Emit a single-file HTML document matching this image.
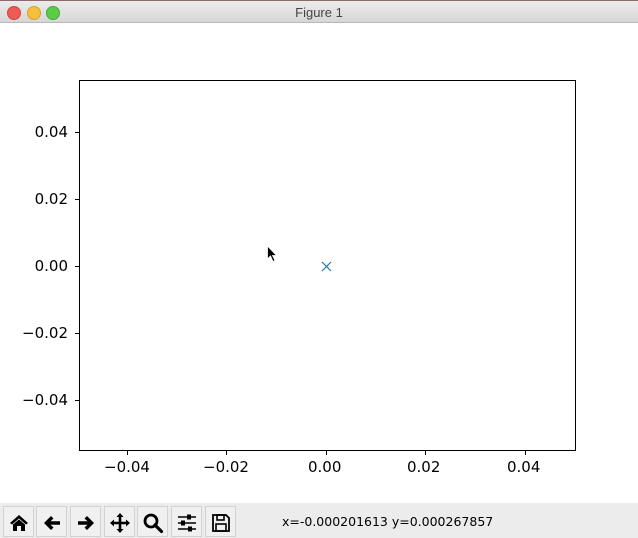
<!DOCTYPE html>
<html><head><meta charset="utf-8"><style>
body{margin:0;width:638px;height:538px;overflow:hidden;background:#fff;font-family:"Liberation Sans","DejaVu Sans",sans-serif;position:relative}
.tb{position:absolute;left:0;top:0;width:638px;height:23px;background:linear-gradient(#ececec,#d6d6d6);border-bottom:1px solid #b8b8b8;border-top:1px solid #8a6a6a;box-sizing:border-box}
.dot{position:absolute;top:5px;width:12px;height:12px;border-radius:50%}
.title{position:absolute;top:4px;left:0;width:638px;text-align:center;font-size:13px;color:#444}
.lbl{position:absolute;font-family:"DejaVu Sans",sans-serif;font-size:15px;color:#000}
.bar{position:absolute;left:0;top:503px;width:638px;height:35px;background:#ececec}
.btn{position:absolute;top:3px;width:31px;height:31px;background:#f0f0f0;border:1px solid #d2d2d2;box-sizing:border-box}
.btn svg{position:absolute;left:4px;top:5px}
</style></head><body>
<div class="tb">
<div class="dot" style="left:7px;background:#ee5a55;border:0.5px solid #d04440"></div>
<div class="dot" style="left:27px;background:#f5be3b;border:0.5px solid #d8a030"></div>
<div class="dot" style="left:46px;background:#5ccb48;border:0.5px solid #44a836"></div>
<div class="title">Figure 1</div>
</div>
<svg width="638" height="538" style="position:absolute;left:0;top:0">
<rect x="79.5" y="80.5" width="496" height="370" fill="none" stroke="#000" stroke-width="1"/>
<g stroke="#000" stroke-width="1">
<line x1="75" x2="79" y1="132.5" y2="132.5"/><line x1="75" x2="79" y1="199.5" y2="199.5"/><line x1="75" x2="79" y1="266.5" y2="266.5"/><line x1="75" x2="79" y1="333.5" y2="333.5"/><line x1="75" x2="79" y1="400.5" y2="400.5"/>
<line y1="451" y2="455" x1="127.5" x2="127.5"/><line y1="451" y2="455" x1="226.5" x2="226.5"/><line y1="451" y2="455" x1="326.5" x2="326.5"/><line y1="451" y2="455" x1="425.5" x2="425.5"/><line y1="451" y2="455" x1="525.5" x2="525.5"/>
</g>
<g stroke="#1f77b4" stroke-width="1.2"><line x1="322" y1="262" x2="331" y2="271"/><line x1="331" y1="262" x2="322" y2="271"/></g>
<path d="M267.5 246 L267.5 259 L270.5 256 L273 261.5 L275 260.5 L272.5 255.5 L276.5 255.5 Z" fill="#000" stroke="#fff" stroke-width="0.8"/>
</svg>
<div class="lbl" style="right:570px;top:123px">0.04</div>
<div class="lbl" style="right:570px;top:190px">0.02</div>
<div class="lbl" style="right:570px;top:257px">0.00</div>
<div class="lbl" style="right:570px;top:324px">−0.02</div>
<div class="lbl" style="right:570px;top:391px">−0.04</div>
<div class="lbl" style="left:104px;top:458px">−0.04</div>
<div class="lbl" style="left:203px;top:458px">−0.02</div>
<div class="lbl" style="left:308px;top:458px">0.00</div>
<div class="lbl" style="left:407px;top:458px">0.02</div>
<div class="lbl" style="left:507px;top:458px">0.04</div>
<div class="bar">
<div class="btn" style="left:3px"><svg width="22" height="22" viewBox="0 0 22 22"><path d="M11 3 L2 11 L4 12.5 L11 6.5 L18 12.5 L20 11 Z M5 12.5 L11 7.5 L17 12.5 L17 19 L13 19 L13 14 L9 14 L9 19 L5 19 Z" fill="#000"/></svg></div>
<div class="btn" style="left:36px"><svg width="22" height="22" viewBox="0 0 22 22"><path d="M3 11 L10 4 L12.5 6.5 L9.5 9.3 L19 9.3 L19 12.7 L9.5 12.7 L12.5 15.5 L10 18 Z" fill="#000"/></svg></div>
<div class="btn" style="left:70px"><svg width="22" height="22" viewBox="0 0 22 22"><path d="M19 11 L12 4 L9.5 6.5 L12.5 9.3 L3 9.3 L3 12.7 L12.5 12.7 L9.5 15.5 L12 18 Z" fill="#000"/></svg></div>
<div class="btn" style="left:104px"><svg width="22" height="22" viewBox="0 0 22 22"><path d="M11 1 L14.5 5 L12.3 5 L12.3 9.7 L17 9.7 L17 7.5 L21 11 L17 14.5 L17 12.3 L12.3 12.3 L12.3 17 L14.5 17 L11 21 L7.5 17 L9.7 17 L9.7 12.3 L5 12.3 L5 14.5 L1 11 L5 7.5 L5 9.7 L9.7 9.7 L9.7 5 L7.5 5 Z" fill="#000"/></svg></div>
<div class="btn" style="left:137px"><svg width="22" height="22" viewBox="0 0 22 22"><circle cx="9" cy="9" r="6" fill="none" stroke="#000" stroke-width="2.8"/><line x1="13" y1="13" x2="19.5" y2="19.5" stroke="#000" stroke-width="3.2" stroke-linecap="round"/></svg></div>
<div class="btn" style="left:171px"><svg width="22" height="22" viewBox="0 0 22 22"><g stroke="#000" stroke-width="1.6"><line x1="2" y1="5" x2="20" y2="5"/><line x1="2" y1="11" x2="20" y2="11"/><line x1="2" y1="17" x2="20" y2="17"/></g><rect x="11" y="2.5" width="4" height="5" fill="#000"/><rect x="5" y="8.5" width="4" height="5" fill="#000"/><rect x="12" y="14.5" width="4" height="5" fill="#000"/></svg></div>
<div class="btn" style="left:205px"><svg width="22" height="22" viewBox="0 0 22 22"><path d="M3 3 L16 3 L19 6 L19 19 L3 19 Z" fill="none" stroke="#000" stroke-width="1.8"/><rect x="7" y="3" width="7" height="5" fill="none" stroke="#000" stroke-width="1.6"/><rect x="6" y="12" width="10" height="7" fill="none" stroke="#000" stroke-width="1.6"/></svg></div>
<div style="position:absolute;left:282px;top:11px;font-family:'DejaVu Sans',sans-serif;font-size:12.5px;color:#000">x=-0.000201613 y=0.000267857</div>
</div>
</body></html>
